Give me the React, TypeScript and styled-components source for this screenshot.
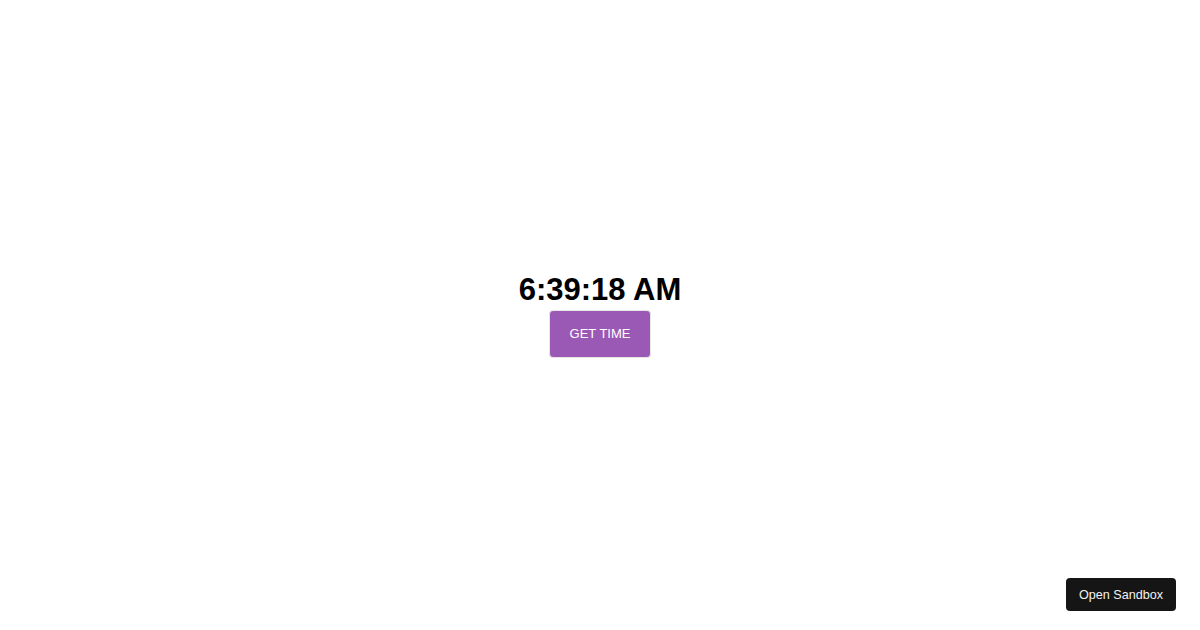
import React, { useState } from 'react';
import styled, { createGlobalStyle } from 'styled-components';

const GlobalStyle = createGlobalStyle`
  html, body {
    margin: 0;
    padding: 0;
    background: #ffffff;
    font-family: 'Liberation Sans', Arial, sans-serif;
  }
`;

function formatTime(date: Date) {
  return date.toLocaleTimeString('en-US');
}

function App() {
  const [time, setTime] = useState('6:39:18 AM');

  return (
    <>
      <GlobalStyle />
      <ClockBlock>
        <TimeLabel>{time}</TimeLabel>
        <GetTimeButton onClick={() => setTime(formatTime(new Date()))}>GET TIME</GetTimeButton>
      </ClockBlock>
      <SandboxLink href="#">Open Sandbox</SandboxLink>
    </>
  );
}

const ClockBlock = styled.main`
  display: flex;
  height: 100vh;
  flex-direction: column;
  justify-content: center;
  align-items: center;
`;

const TimeLabel = styled.h1`
  margin: 0 0 2px;
  font-size: 31px;
  line-height: 36px;
  font-weight: 700;
  color: #000;
`;

const GetTimeButton = styled.button`
  padding: 15px 20px;
  border: 1px solid #e6e6e6;
  border-radius: 4px;
  background: #9b59b6;
  color: #fff;
  font-family: 'Liberation Sans', Arial, sans-serif;
  font-size: 13px;
  line-height: 16px;
  cursor: pointer;
`;

const SandboxLink = styled.a`
  position: fixed;
  right: 24px;
  bottom: 19px;
  display: flex;
  height: 33px;
  padding: 0 13px;
  align-items: center;
  box-sizing: border-box;
  border-radius: 4px;
  background: #151515;
  color: #f2f2f2;
  font-size: 12.6px;
  text-decoration: none;
`;

export default App;
